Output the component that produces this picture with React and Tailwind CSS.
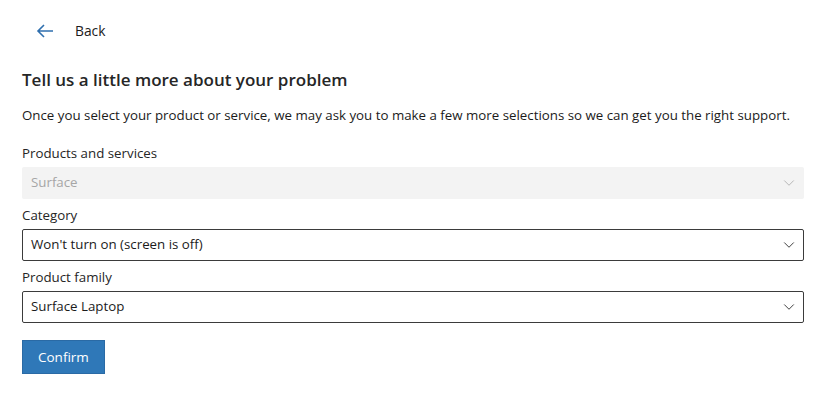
import { ChevronDown } from 'lucide-react';

const font = { fontFamily: '"Segoe UI", "Open Sans", "Noto Sans", sans-serif' };

function Select({ value, disabled }) {
    return (
        <div
            className={
                disabled
                    ? "h-[32px] w-full bg-[#f3f3f3] rounded-[2px] flex items-center justify-between pl-[9px] pr-[6px] text-[#a6a6a6]"
                    : "h-[32px] w-full bg-white border border-[#3b3b3b] rounded-[2px] flex items-center justify-between pl-[8px] pr-[5px] text-[#1b1b1b]"
            }
        >
            <span className="text-[13.3px]">{value}</span>
            <ChevronDown size={18} strokeWidth={1.2} className={disabled ? "text-[#b0b0b0]" : "text-[#2b2b2b]"} />
        </div>
    );
}

export default function App() {
    return (
        <div className="min-h-screen bg-white text-[#1b1b1b]" style={font}>
            {/* Back link */}
            <div className="flex items-center h-[32px] mt-[15px] pl-[36px]">
                <svg width="18" height="16" viewBox="0 0 18 16" fill="none" className="text-[#2f6fae]">
                    <path d="M17 8H2M8 2L2 8l6 6" stroke="currentColor" strokeWidth="1.6" />
                </svg>
                <span className="ml-[21px] text-[13.8px]">Back</span>
            </div>

            <div className="pl-[22px] pr-[21px] pt-[21px]">
                <h1 className="text-[17px] font-semibold leading-[24px] text-[#262626]">Tell us a little more about your problem</h1>
                <p className="text-[13.3px] mt-[13px] leading-[20px]">
                    Once you select your product or service, we may ask you to make a few more selections so we can get you the right support.
                </p>

                <div className="mt-[18px] text-[13.3px] leading-[20px] text-[#262626]">Products and services</div>
                <div className="mt-[4px]">
                    <Select value="Surface" disabled />
                </div>

                <div className="mt-[6px] text-[13.3px] leading-[20px] text-[#262626]">Category</div>
                <div className="mt-[4px]">
                    <Select value="Won't turn on (screen is off)" />
                </div>

                <div className="mt-[6px] text-[13.3px] leading-[20px] text-[#262626]">Product family</div>
                <div className="mt-[4px]">
                    <Select value="Surface Laptop" />
                </div>

                <button className="mt-[17px] h-[34px] px-[15px] bg-[#2f78b8] text-white text-[13.5px] border border-[#2a6aa5]">
                    Confirm
                </button>
            </div>
        </div>
    );
}
